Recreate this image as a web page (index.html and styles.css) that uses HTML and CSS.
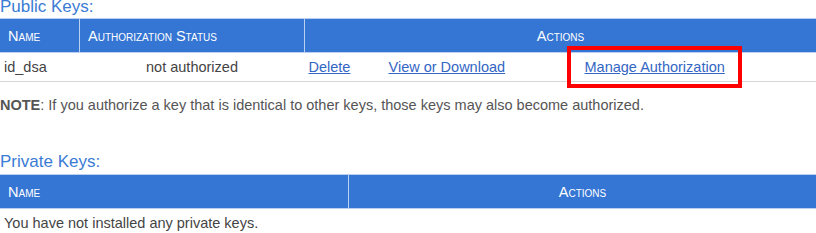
FILE: index.html
```html
<!DOCTYPE html>
<html lang="en">
<head>
    <meta charset="UTF-8">
    <title>SSH Access</title>
    <link rel="stylesheet" href="styles.css">
</head>
<body>
    <div class="page">
        <h2 class="section-title first">Public Keys:</h2>
        <table class="keys">
            <thead>
                <tr>
                    <th class="col-name">Name</th>
                    <th class="col-status">Authorization Status</th>
                    <th class="col-actions" colspan="3">Actions</th>
                </tr>
            </thead>
            <tbody>
                <tr>
                    <td>id_dsa</td>
                    <td class="center">not authorized</td>
                    <td class="act-delete"><a href="#">Delete</a></td>
                    <td class="act-view"><a href="#">View or Download</a></td>
                    <td class="act-manage">
                        <span class="highlight"><a href="#">Manage Authorization</a></span>
                    </td>
                </tr>
            </tbody>
        </table>

        <p class="note"><strong>NOTE</strong>: If you authorize a key that is identical to other keys, those keys may also become authorized.</p>

        <h2 class="section-title">Private Keys:</h2>
        <table class="keys">
            <thead>
                <tr>
                    <th class="col-pname">Name</th>
                    <th class="col-pactions">Actions</th>
                </tr>
            </thead>
            <tbody>
                <tr>
                    <td colspan="2" class="empty">You have not installed any private keys.</td>
                </tr>
            </tbody>
        </table>
    </div>
</body>
</html>
```

FILE: styles.css
```css
body {
    margin: 0;
    font-family: "Liberation Sans", Arial, sans-serif;
    font-size: 14.5px;
    color: #555555;
    background-color: #ffffff;
}

.page {
    overflow: hidden;
}

.section-title {
    font-size: 17px;
    font-weight: normal;
    color: #3a7bd5;
    line-height: 18px;
    margin: 0 0 3px 0;
}

.section-title.first {
    margin-top: -2px;
    margin-bottom: 2px;
}

.keys {
    width: 100%;
    border-collapse: collapse;
}

.keys th {
    background-color: #3575d3;
    color: #ffffff;
    font-weight: normal;
    font-size: 14.5px;
    font-variant: small-caps;
    text-align: left;
    height: 33px;
    padding: 0 8px;
    border: 1px solid #b9d0f0;
    border-right: none;
}

.keys th:first-child {
    border-left: none;
}

.keys th.col-actions,
.keys th.col-pactions {
    text-align: center;
}

.col-name { width: 63px; }
.col-status { width: 208px; }
.col-pname { width: 332px; }

.keys td {
    height: 28px;
    padding: 0 4px;
    border-bottom: 1px solid #d6d6d6;
    color: #444444;
}

.keys td.center {
    text-align: center;
}

.keys td.empty {
    border-bottom: none;
}

.keys a {
    color: #3366c4;
    text-decoration: underline;
}

.act-delete { width: 72px; }
.act-view { width: 188px; }

.act-manage {
    padding-left: 16px;
}

.highlight {
    position: relative;
}

/* red annotation box */
.highlight::after {
    content: "";
    position: absolute;
    left: -18px;
    right: -17px;
    top: -13px;
    bottom: -13px;
    border: 4px solid #ff0000;
}

.note {
    margin: 14px 0 0 0;
    line-height: 18px;
}

.note strong {
    color: #555555;
}

.note + .section-title {
    margin-top: 39px;
}
```
